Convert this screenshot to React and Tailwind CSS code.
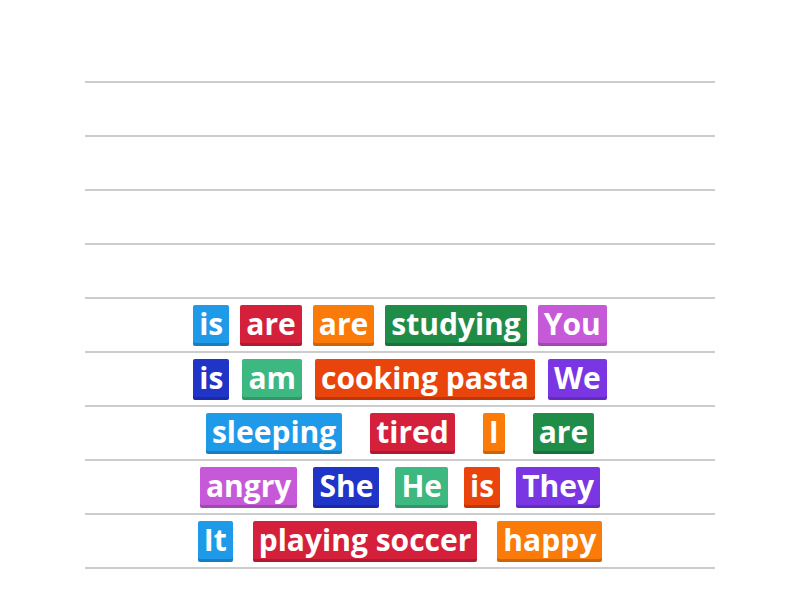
import React from "react";

const C = {
  sky: "bg-[#1f9ae9]",
  red: "bg-[#d5203b]",
  orange: "bg-[#fa7a0a]",
  green: "bg-[#1f8c47]",
  pink: "bg-[#c659d8]",
  navy: "bg-[#2034c8]",
  teal: "bg-[#3cb880]",
  redorange: "bg-[#e8440b]",
  violet: "bg-[#7b36e4]",
};

const rows = [
  { gap: "gap-[11px]", items: [["is", C.sky], ["are", C.red], ["are", C.orange], ["studying", C.green], ["You", C.pink]] },
  { gap: "gap-[13px]", items: [["is", C.navy], ["am", C.teal], ["cooking pasta", C.redorange], ["We", C.violet]] },
  { gap: "gap-[28px]", items: [["sleeping", C.sky], ["tired", C.red], ["I", C.orange], ["are", C.green]] },
  { gap: "gap-[16px]", items: [["angry", C.pink], ["She", C.navy], ["He", C.teal], ["is", C.redorange], ["They", C.violet]] },
  { gap: "gap-[20px]", items: [["It", C.sky], ["playing soccer", C.red], ["happy", C.orange]] },
];

function Tile({ text, color }) {
  return (
    <div
      className={`${color} h-[41px] px-[6px] rounded-[2px] text-white font-bold text-[30px] leading-[38px] whitespace-nowrap shadow-[inset_0_-3px_0_rgba(0,0,0,0.18)]`}
      style={{ fontFamily: '"Open Sans", sans-serif' }}
    >
      {text}
    </div>
  );
}

export default function App() {
  return (
    <div className="w-[800px] h-[600px] bg-white">
      <div className="ml-[85px] w-[630px] pt-[81px]">
        <div className="border-t-2 border-[#cccccc]">
          {[0, 1, 2, 3].map((i) => (
            <div key={i} className="h-[54px] border-b-2 border-[#cccccc]" />
          ))}
          {rows.map((r, i) => (
            <div
              key={"r" + i}
              className={`h-[54px] border-b-2 border-[#cccccc] flex justify-center items-start pt-[6px] ${r.gap}`}
            >
              {r.items.map(([t, c], j) => (
                <Tile key={j} text={t} color={c} />
              ))}
            </div>
          ))}
        </div>
      </div>
    </div>
  );
}
